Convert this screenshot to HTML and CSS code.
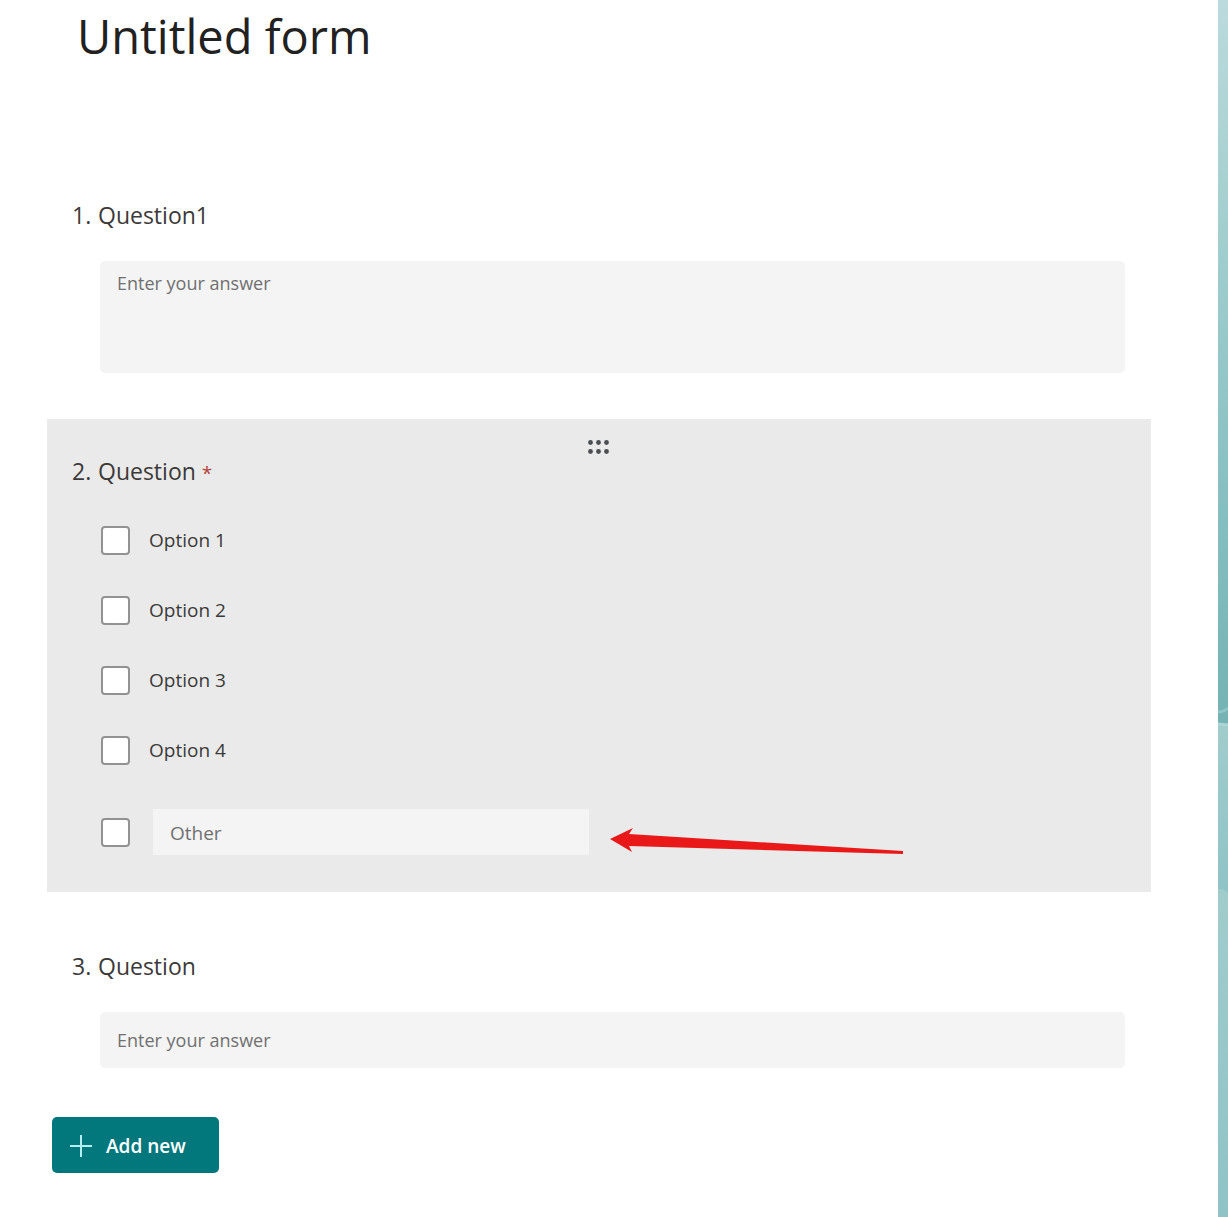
FILE: index.html
```html
<!DOCTYPE html>
<html lang="en">
<head>
<meta charset="utf-8">
<meta name="viewport" content="width=device-width, initial-scale=1">
<title>Untitled form</title>
<link rel="stylesheet" href="styles.css">
</head>
<body>
<main class="form">
  <h1 class="form-title">Untitled form</h1>

  <section class="question">
    <h2 class="question-title"><span class="number">1.</span><label for="answer-1">Question1</label></h2>
    <textarea class="answer answer-long" id="answer-1" placeholder="Enter your answer"></textarea>
  </section>

  <section class="question question-active">
    <button class="drag-handle" type="button" aria-label="Move question">
      <svg width="24" height="16" viewBox="0 0 24 16" fill="currentColor" aria-hidden="true">
        <circle cx="3.5" cy="3.5" r="2.4"/><circle cx="11.5" cy="3.5" r="2.4"/><circle cx="19.5" cy="3.5" r="2.4"/>
        <circle cx="3.5" cy="12.5" r="2.4"/><circle cx="11.5" cy="12.5" r="2.4"/><circle cx="19.5" cy="12.5" r="2.4"/>
      </svg>
    </button>
    <h2 class="question-title"><span class="number">2.</span><span>Question <span class="required">*</span></span></h2>
    <div class="options">
      <label class="option"><input class="check" type="checkbox">Option 1</label>
      <label class="option"><input class="check" type="checkbox">Option 2</label>
      <label class="option"><input class="check" type="checkbox">Option 3</label>
      <label class="option"><input class="check" type="checkbox">Option 4</label>
    </div>
    <div class="other">
      <input class="check" type="checkbox" aria-label="Other">
      <input class="other-text" type="text" placeholder="Other" aria-label="Other answer">
      <svg class="arrow" width="296" height="28" viewBox="0 0 296 28" aria-hidden="true">
        <path fill="#e91919" d="M1 11 24 0 20 6 294 23v3L20 18l3 6Z"/>
      </svg>
    </div>
  </section>

  <section class="question">
    <h2 class="question-title"><span class="number">3.</span><label for="answer-3">Question</label></h2>
    <input class="answer answer-short" id="answer-3" type="text" placeholder="Enter your answer">
  </section>

  <button class="add-new" type="button">
    <svg width="22" height="22" viewBox="0 0 22 22" fill="none" stroke="#b5eeee" stroke-width="2" aria-hidden="true">
      <path d="M11 0v22M0 11h22"/>
    </svg>
    Add new
  </button>
</main>
<aside class="backdrop" aria-hidden="true">
  <svg width="10" height="1217" viewBox="0 0 10 1217" preserveAspectRatio="none">
    <defs>
      <linearGradient id="sky" x1="0" y1="0" x2="0" y2="1">
        <stop offset="0" stop-color="#bbdadd"/><stop offset=".35" stop-color="#a0cdcd"/><stop offset=".7" stop-color="#86bfc1"/><stop offset="1" stop-color="#74b2b3"/>
      </linearGradient>
      <linearGradient id="hill" x1="0" y1="0" x2="0" y2="1">
        <stop offset="0" stop-color="#a1cccc"/><stop offset="1" stop-color="#8fc3c6"/>
      </linearGradient>
    </defs>
    <path fill="url(#sky)" d="M0 0h10v725H0z"/>
    <path fill="url(#hill)" d="M0 724h10v170H0z"/>
    <path fill="url(#hill)" d="M0 889q6 0 10 4v324H0z"/>
    <path fill="none" stroke="#8fc5c6" stroke-width="3" d="M0 712q6 0 10-4"/>
    <path fill="none" stroke="#add4d5" stroke-width="3" d="M0 724l10 1"/>
  </svg>
</aside>
</body>
</html>
```

FILE: styles.css
```css
* {
  box-sizing: border-box;
}

body {
  display: grid;
  grid-template-columns: minmax(0, 1fr) 10px;
  min-height: 100vh;
  margin: 0;
  background: #fff;
  color: #3b3a39;
  font-family: "Open Sans", "Noto Sans", sans-serif;
  font-size: 19px;
}

.form {
  padding: 0 67px 44px 47px;
}

.form-title {
  margin: 0 0 127px;
  padding-left: 30px;
  color: #212121;
  font-size: 47px;
  font-weight: 400;
  line-height: 72px;
}

.question {
  padding: 0 26px 0 25px;
}

.question-title {
  display: grid;
  grid-template-columns: 26px minmax(0, 1fr);
  margin: 0 0 30px;
  font-size: 23px;
  font-weight: 400;
  line-height: 32px;
}

.required {
  color: #b5423a;
  font-size: 19px;
}

.answer {
  display: block;
  width: calc(100% - 28px);
  margin: 0 0 0 28px;
  padding: 8px 17px;
  border: 0;
  border-radius: 5px;
  background: #f4f4f4;
  color: inherit;
  font: 18px/28px "Open Sans", "Noto Sans", sans-serif;
  resize: none;
}

.answer::placeholder,
.other-text::placeholder {
  color: #707070;
  opacity: 1;
}

.answer-long {
  height: 112px;
}

.answer-short {
  height: 56px;
}

.question-active {
  position: relative;
  margin: 46px 0 58px;
  padding-top: 36px;
  padding-bottom: 37px;
  background: #eaeaea;
}

.drag-handle {
  position: absolute;
  top: 20px;
  left: 50%;
  display: block;
  height: 16px;
  padding: 0;
  border: 0;
  background: none;
  color: #4a4e50;
  transform: translateX(-50%);
}

.drag-handle svg {
  display: block;
}

.options {
  display: grid;
  gap: 30px;
  margin: 31px 0 39px 29px;
}

.option {
  display: flex;
  align-items: center;
  gap: 19px;
  height: 40px;
}

.check {
  flex: none;
  width: 29px;
  height: 29px;
  margin: 0;
  border: 2px solid #929292;
  border-radius: 4px;
  background: #fff;
  appearance: none;
}

.check:checked {
  background: #03787c;
}

.other {
  display: flex;
  align-items: center;
  gap: 23px;
  height: 46px;
  margin-left: 29px;
}

.other-text {
  width: 436px;
  height: 46px;
  padding: 2px 17px 0;
  border: 0;
  background: #f4f4f4;
  color: inherit;
  font: inherit;
}

.arrow {
  margin-top: 20px;
  margin-left: -3px;
}

.add-new {
  display: flex;
  align-items: center;
  gap: 14px;
  width: 167px;
  height: 56px;
  margin: 49px 0 0 5px;
  padding: 2px 18px 0;
  border: 0;
  border-radius: 5px;
  background: #03787c;
  color: #fff;
  font: 600 19px/28px "Open Sans", "Noto Sans", sans-serif;
  white-space: nowrap;
}

.backdrop svg {
  display: block;
  width: 100%;
  height: 100%;
}
```
